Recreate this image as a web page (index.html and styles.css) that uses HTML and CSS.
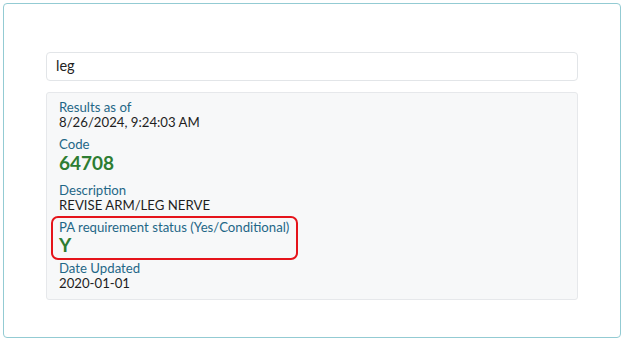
FILE: index.html
```html
<!DOCTYPE html>
<html>
<head>
<meta charset="utf-8">
<link rel="stylesheet" href="styles.css">
</head>
<body>
<div class="frame">
  <div class="search">leg</div>
  <div class="results">
    <div class="field">
      <div class="label">Results as of</div>
      <div class="value">8/26/2024, 9:24:03 AM</div>
    </div>
    <div class="field">
      <div class="label">Code</div>
      <div class="value big">64708</div>
    </div>
    <div class="field">
      <div class="label">Description</div>
      <div class="value">REVISE ARM/LEG NERVE</div>
    </div>
    <div class="field highlight">
      <div class="label">PA requirement status (Yes/Conditional)</div>
      <div class="value big status">Y</div>
    </div>
    <div class="field last">
      <div class="label">Date Updated</div>
      <div class="value">2020-01-01</div>
    </div>
  </div>
</div>
</body>
</html>
```

FILE: styles.css
```css
html, body {
  margin: 0;
  padding: 0;
  background: #ffffff;
}
body {
  font-family: "Lato", "Open Sans", sans-serif;
  font-size: 13.2px;
  color: #222222;
}
.frame {
  box-sizing: border-box;
  margin: 3px 0 0 3px;
  width: 618px;
  height: 335px;
  border: 1px solid #93cbd3;
  border-radius: 4px;
  padding: 48px 42px 0 42px;
}
.search {
  box-sizing: border-box;
  height: 29px;
  border: 1px solid #e2e5e8;
  border-radius: 4px;
  padding: 0 9px;
  line-height: 26px;
  font-size: 14.5px;
  color: #222;
}
.results {
  margin-top: 11px;
  background: #f7f8f9;
  border: 1px solid #e6e8eb;
  border-radius: 3px;
  padding: 7px 12px 8px 12px;
}
.field {
  margin-bottom: 7px;
}
.field.last {
  margin-bottom: 0;
}
.label {
  color: #1f6787;
  line-height: 15px;
}
.value {
  line-height: 15px;
  color: #1e1e1e;
}
.value.big {
  font-size: 19px;
  line-height: 22px;
  color: #2e7d32;
  font-weight: 700;
  margin-bottom: 9px;
}
.value.status {
  font-size: 19px;
  line-height: 19px;
  margin-bottom: 0;
}
.highlight {
  position: relative;
  width: fit-content;
}
.highlight::after {
  content: "";
  position: absolute;
  top: -4px;
  left: -8px;
  right: -9px;
  bottom: -6px;
  border: 2px solid #e5141b;
  border-radius: 7px;
}
```
